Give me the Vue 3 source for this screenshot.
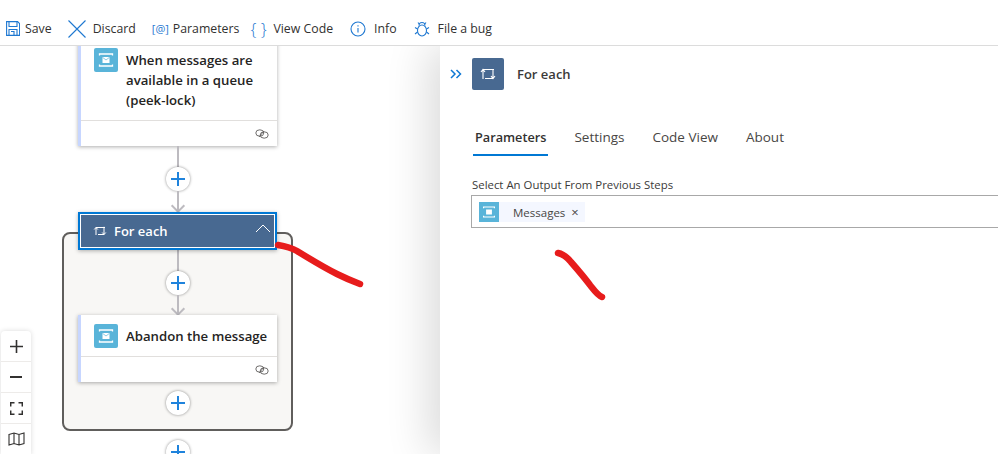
<template>
    <div class="page">
        <div class="toolbar">
            <button class="tool" v-for="tool in tools" :key="tool.label" :style="{ marginRight: tool.gap + 'px' }">
                <svg v-if="tool.icon === 'save'" width="14" height="15" viewBox="0 0 14 15" fill="none" stroke="#1f78d1" stroke-width="1.100">
                    <path d="M.6 .6h11l2 2v11.800H.6z" />
                    <path d="M3 .6v4.900h8V.6M3 14.400V8.500h8v5.900M5 10.500h3v3.900" />
                </svg>
                <svg v-else-if="tool.icon === 'discard'" width="18" height="18" viewBox="0 0 18 18" fill="none" stroke="#1f78d1" stroke-width="1.100">
                    <path d="M.5 .5l17 17M17.500 .5L.5 17.500" />
                </svg>
                <span v-else-if="tool.icon === 'params'" class="tool-glyph params">[@]</span>
                <span v-else-if="tool.icon === 'code'" class="tool-glyph code">{ }</span>
                <svg v-else-if="tool.icon === 'info'" width="16" height="16" viewBox="0 0 16 16" fill="none" stroke="#1f78d1" stroke-width="1.100">
                    <circle cx="8" cy="8" r="7" />
                    <path d="M8 7v4.500M8 4.200v1.300" />
                </svg>
                <svg v-else width="16" height="16" viewBox="0 0 16 16" fill="none" stroke="#1f78d1" stroke-width="1.100">
                    <ellipse cx="8" cy="9.500" rx="4.500" ry="5.500" />
                    <path d="M5 4.500a3 3 0 0 1 6 0M4 1.500l1.500 2M12 1.500l-1.500 2M3.500 8L1 6.500M12.500 8L15 6.500M3.500 11L1 13M12.500 11l2.500 2" />
                </svg>
                <span class="tool-label" :style="{ marginLeft: tool.offset + 'px' }">{{ tool.label }}</span>
            </button>
        </div>

        <div class="workspace">
            <div class="canvas">
                <div class="card first-card">
                    <div class="card-head">
                        <svg class="bus-icon" width="24" height="24" viewBox="0 0 24 24">
                            <rect width="24" height="24" rx="2" fill="#59b4d9" />
                            <path d="M5.500 7.500V6h13v1.500M5.500 16.500V18h13v-1.500" fill="none" stroke="#fff" stroke-width="1.300" />
                            <rect x="8.500" y="9" width="7" height="6" fill="#fff" />
                            <path d="M8.500 9.300L12 12l3.500-2.700" fill="none" stroke="#59b4d9" stroke-width=".7" />
                        </svg>
                        <div class="card-title">When messages are available in a queue (peek-lock)</div>
                    </div>
                    <div class="card-foot">
                        <svg width="14" height="10" viewBox="0 0 14 10" fill="none" stroke="#605e5c" stroke-width=".9">
                            <ellipse cx="4.800" cy="4" rx="4" ry="3.200" />
                            <ellipse cx="9.200" cy="6" rx="4" ry="3.200" />
                            <path d="M4 8l5-6" />
                        </svg>
                    </div>
                </div>

                <div class="connector">
                    <div class="line"></div>
                    <div class="add"><span class="add-h"></span><span class="add-v"></span></div>
                    <div class="line arrow"></div>
                </div>

                <div class="loop-head">
                    <svg width="14" height="12" viewBox="0 0 14 12" fill="none" stroke="#fff" stroke-width="1">
                        <path d="M3 10V2.500h9M1.200 4.500L3 2.500l1.800 2M11 1.800v7.700H5M9.200 7.500l1.800 2 1.800-2" />
                    </svg>
                    <span class="loop-title">For each</span>
                    <svg class="chevron" width="16" height="9" viewBox="0 0 16 9" fill="none" stroke="#fff" stroke-width="1">
                        <path d="M1 8l7-7 7 7" />
                    </svg>
                </div>

                <div class="loop-box">
                    <div class="connector inner">
                        <div class="line"></div>
                        <div class="add"><span class="add-h"></span><span class="add-v"></span></div>
                        <div class="line arrow"></div>
                    </div>
                    <div class="card">
                        <div class="card-head">
                            <svg class="bus-icon" width="24" height="24" viewBox="0 0 24 24">
                                <rect width="24" height="24" rx="2" fill="#59b4d9" />
                                <path d="M5.500 7.500V6h13v1.500M5.500 16.500V18h13v-1.500" fill="none" stroke="#fff" stroke-width="1.300" />
                                <rect x="8.500" y="9" width="7" height="6" fill="#fff" />
                                <path d="M8.500 9.300L12 12l3.500-2.700" fill="none" stroke="#59b4d9" stroke-width=".7" />
                            </svg>
                            <div class="card-title">Abandon the message</div>
                        </div>
                        <div class="card-foot">
                            <svg width="14" height="10" viewBox="0 0 14 10" fill="none" stroke="#605e5c" stroke-width=".9">
                                <ellipse cx="4.800" cy="4" rx="4" ry="3.200" />
                                <ellipse cx="9.200" cy="6" rx="4" ry="3.200" />
                                <path d="M4 8l5-6" />
                            </svg>
                        </div>
                    </div>
                    <div class="add spaced"><span class="add-h"></span><span class="add-v"></span></div>
                </div>

                <div class="add spaced"><span class="add-h"></span><span class="add-v"></span></div>
            </div>

            <div class="panel">
                <div class="panel-head">
                    <svg class="collapse" width="12" height="10" viewBox="0 0 12 10" fill="none" stroke="#0f78d4" stroke-width="1.500">
                        <path d="M1 1l4 4-4 4M6.500 1l4 4-4 4" />
                    </svg>
                    <div class="panel-icon">
                        <svg width="16" height="14" viewBox="0 0 16 14" fill="none" stroke="#fff" stroke-width="1.100">
                            <path d="M3 12V2.500h11M1 5l2-2.500L5 5M13 2.500v9H5M11 9l2 2.500L15 9" />
                        </svg>
                    </div>
                    <span class="panel-title">For each</span>
                </div>

                <div class="tabs">
                    <div class="tab" v-for="(tab, i) in tabs" :key="tab" :class="{ active: i === 0 }">{{ tab }}</div>
                </div>

                <div class="field">
                    <label class="field-label">Select An Output From Previous Steps</label>
                    <div class="field-input">
                        <div class="token">
                            <svg width="20" height="20" viewBox="0 0 24 24">
                                <rect width="24" height="24" fill="#59b4d9" />
                                <path d="M5.500 7.500V6h13v1.500M5.500 16.500V18h13v-1.500" fill="none" stroke="#fff" stroke-width="1.400" />
                                <rect x="8.500" y="9" width="7" height="6" fill="#fff" />
                            </svg>
                            <span class="token-text">Messages</span>
                            <span class="token-x">×</span>
                        </div>
                    </div>
                </div>
            </div>

            <svg class="scribble" width="998" height="408" viewBox="0 46 998 408" fill="none" stroke="#e71c1c" stroke-width="6.500" stroke-linecap="round" stroke-linejoin="round">
                <path d="M278 245C284 246 290 247 297 251C310 259 325 268 337 274C345 278 352 281 360 284" />
                <path d="M558 253C563 254 567 257 571 262C578 270 584 277 590 285C594 290 597 295 602 297" />
            </svg>

            <div class="zoom-bar">
                <div class="zoom-btn">
                    <svg width="13" height="13" viewBox="0 0 13 13" fill="none" stroke="#323130" stroke-width="1.600">
                        <path d="M0 6.500h13M6.500 0v13" />
                    </svg>
                </div>
                <div class="zoom-btn"><span class="minus"></span></div>
                <div class="zoom-btn">
                    <svg width="13" height="13" viewBox="0 0 13 13" fill="none" stroke="#323130" stroke-width="1.500">
                        <path d="M.7 4.500V.7h3.800M8.500 .7h3.800v3.800M12.300 8.500v3.800H8.500M4.500 12.300H.7V8.500" />
                    </svg>
                </div>
                <div class="zoom-btn">
                    <svg width="17" height="14" viewBox="0 0 17 14" fill="none" stroke="#323130" stroke-width="1.100">
                        <path d="M1 2.500l5-1.500 5 1.500 5-1.500v10.500l-5 1.500-5-1.500-5 1.500zM6 1v10.500M11 2.500V13" />
                    </svg>
                </div>
            </div>
        </div>
    </div>
</template>

<script setup>
const tools = [
    { label: 'Save', icon: 'save', offset: 5, gap: 16 },
    { label: 'Discard', icon: 'discard', offset: 7, gap: 16 },
    { label: 'Parameters', icon: 'params', offset: 4, gap: 11 },
    { label: 'View Code', icon: 'code', offset: 9, gap: 17 },
    { label: 'Info', icon: 'info', offset: 8, gap: 17 },
    { label: 'File a bug', icon: 'bug', offset: 8, gap: 0 }
]

const tabs = ['Parameters', 'Settings', 'Code View', 'About']
</script>

<style>
html, body {
    margin: 0;
    background: #fff;
}
</style>

<style scoped>
.page {
    width: 998px;
    height: 454px;
    overflow: hidden;
    background: #fff;
    font-family: "Open Sans", "Noto Sans", sans-serif;
    color: #323130;
}

.toolbar {
    box-sizing: border-box;
    display: flex;
    align-items: center;
    padding: 12px 0 0 6px;
    border-bottom: 1px solid #dcdcdc;
    height: 46px;
}

.tool {
    display: flex;
    align-items: center;
    border: 0;
    padding: 0;
    background: none;
    font: inherit;
    font-size: 12.300px;
    color: #323130;
}

.tool-glyph {
    color: #1f78d1;
    font-size: 11px;
}

.code {
    font-size: 17px;
    font-weight: 300;
    line-height: 16px;
    width: 14px;
    white-space: nowrap;
}

.workspace {
    position: relative;
    display: flex;
    height: 408px;
    overflow: hidden;
}

.canvas {
    flex: 0 0 440px;
    box-sizing: border-box;
    width: 440px;
    padding-right: 85px;
    display: flex;
    flex-direction: column;
    align-items: center;
}

.card {
    flex: none;
    width: 199px;
    box-sizing: border-box;
    background: #fff;
    border-left: 3px solid #c7d6ff;
    box-shadow: 0 1px 4px rgba(0, 0, 0, 0.32);
    position: relative;
}

.first-card {
    margin-top: -7px;
}

.card-head {
    display: flex;
    gap: 8px;
    padding: 9px 8px 8px 13px;
    border-bottom: 1px solid #e1dfdd;
}

.bus-icon {
    flex: none;
}

.card-title {
    margin: 2px 0;
    font-size: 13.200px;
    font-weight: 600;
    line-height: 20px;
    color: #252423;
    white-space: normal;
}

.card-foot {
    height: 25px;
    display: flex;
    justify-content: flex-end;
    align-items: center;
    padding-right: 8px;
}

.connector {
    flex: none;
    display: flex;
    flex-direction: column;
    align-items: center;
    height: 66px;
}

.connector.inner {
    height: 65px;
}

.line {
    flex: 1;
    width: 2px;
    background: #bdbbc0;
    position: relative;
}

.arrow::after {
    content: "";
    position: absolute;
    left: -4px;
    bottom: 1px;
    width: 10px;
    height: 10px;
    box-sizing: border-box;
    border-right: 2px solid #bdbbc0;
    border-bottom: 2px solid #bdbbc0;
    transform: rotate(45deg);
}

.add {
    flex: none;
    position: relative;
    width: 24px;
    height: 24px;
    box-sizing: border-box;
    border-radius: 50%;
    background: #fff;
    box-shadow: 0 0 3px rgba(0, 0, 0, 0.45);
}

.add.spaced {
    margin-top: 9px;
}

.add-h,
.add-v {
    position: absolute;
    background: #1f83dc;
}

.add-h {
    left: 5px;
    top: 11px;
    width: 14px;
    height: 2px;
}

.add-v {
    left: 11px;
    top: 5px;
    width: 2px;
    height: 14px;
}

.loop-head {
    flex: none;
    position: relative;
    z-index: 2;
    width: 199px;
    height: 38px;
    box-sizing: border-box;
    display: flex;
    align-items: center;
    gap: 7px;
    padding: 0 4px 0 13px;
    background: #486991;
    border: 2px solid #0078d4;
    outline: 1px solid #fff;
    outline-offset: -3px;
    box-shadow: 0 1px 4px rgba(0, 0, 0, 0.3);
    color: #fff;
}

.loop-title {
    flex: 1;
    font-size: 13px;
    font-weight: 600;
}

.chevron {
    margin-top: -5px;
}

.loop-box {
    flex: none;
    margin-top: -18px;
    width: 231px;
    height: 199px;
    box-sizing: border-box;
    padding-top: 16px;
    display: flex;
    flex-direction: column;
    align-items: center;
    background: #f8f7f5;
    border: 2px solid #605e5c;
    border-radius: 8px;
}

.panel {
    flex: 1;
    position: relative;
    z-index: 3;
    background: #fff;
    box-shadow: -12px 0 40px rgba(0, 0, 0, 0.14);
}

.panel-head {
    display: flex;
    align-items: center;
    height: 32px;
    margin-top: 12px;
    padding-left: 10px;
}

.collapse {
    flex: none;
}

.panel-icon {
    width: 32px;
    height: 32px;
    margin-left: 10px;
    display: flex;
    align-items: center;
    justify-content: center;
    background: #486991;
    border-radius: 2px;
}

.panel-title {
    margin-left: 13px;
    font-size: 13px;
    font-weight: 600;
    color: #3b3a39;
}

.tabs {
    display: flex;
    gap: 28px;
    margin-top: 32px;
    padding-left: 35px;
}

.tab {
    height: 34px;
    box-sizing: border-box;
    line-height: 30px;
    font-size: 13.500px;
    color: #484644;
}

.tab.active {
    font-size: 12.700px;
    font-weight: 600;
    color: #323130;
    margin: 0 -2px 0 -2px;
    padding: 0 2px;
    border-bottom: 2px solid #0078d4;
}

.field {
    margin-top: 21px;
    padding-left: 32px;
}

.field-label {
    display: block;
    font-size: 11.400px;
    line-height: 16px;
    color: #3b3a39;
}

.field-input {
    margin-top: 2px;
    height: 33px;
    box-sizing: border-box;
    width: 600px;
    margin-left: -1px;
    padding: 6px 7px;
    border: 1px solid #a8a8a8;
}

.token {
    display: inline-flex;
    align-items: center;
    height: 20px;
    background: #f4f7ff;
    font-size: 11.500px;
    color: #484644;
}

.token-text {
    margin-left: 14px;
}

.token-x {
    margin: 0 6px;
    font-size: 13px;
}

.scribble {
    position: absolute;
    left: 0;
    top: 0;
    z-index: 4;
    pointer-events: none;
}

.zoom-bar {
    position: absolute;
    left: 1px;
    top: 285px;
    z-index: 4;
    width: 30px;
    background: #fff;
    border-radius: 4px 4px 0 0;
    box-shadow: 0 0 5px rgba(0, 0, 0, 0.15);
}

.zoom-btn {
    height: 31px;
    display: flex;
    align-items: center;
    justify-content: center;
    border-bottom: 1px solid #edebe9;
    box-sizing: border-box;
}

.minus {
    width: 12px;
    height: 2px;
    background: #323130;
}
</style>
